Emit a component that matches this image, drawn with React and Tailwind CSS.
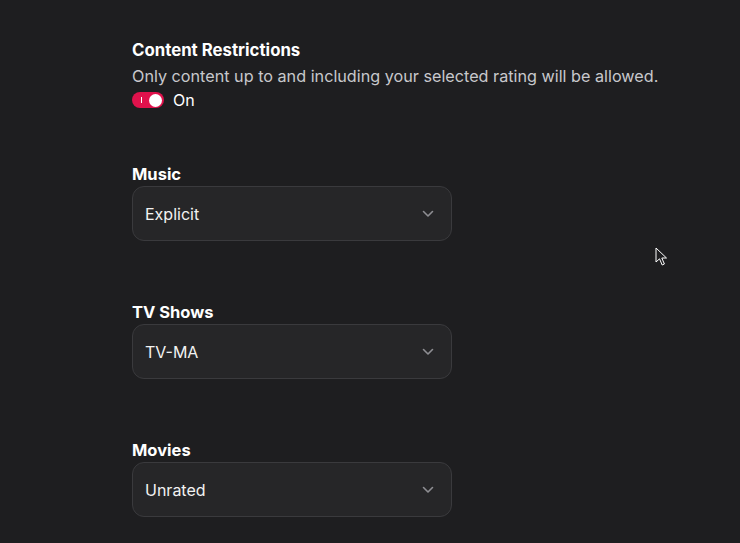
import React from "react";

function Chevron() {
  return (
    <svg width="12" height="8" viewBox="0 0 12 8" fill="none">
      <path d="M1.5 1.5 L6 6 L10.5 1.5" stroke="#8e8e93" strokeWidth="1.6" strokeLinecap="round" strokeLinejoin="round" />
    </svg>
  );
}

function RatingSelect({ label, value }) {
  return (
    <div className="flex flex-col">
      <div className="text-[16.5px] font-bold text-white leading-[20px]">{label}</div>
      <div className="mt-[2px] w-[320px] h-[55px] rounded-[12px] border border-[#3a3a3d] bg-[#262628] flex items-center justify-between pl-[12px] pr-[17px]">
        <span className="text-[16px] text-[#f2f2f2]">{value}</span>
        <Chevron />
      </div>
    </div>
  );
}

export default function App() {
  return (
    <div className="relative w-[740px] h-[543px] overflow-hidden bg-[#1e1e20] font-['Inter',sans-serif]">
      <div className="pl-[132px] pt-[40px] flex flex-col">
        <div className="text-[16.8px] font-bold text-white leading-[20px]">Content Restrictions</div>
        <div className="mt-[6px] text-[16.2px] text-[#c8c8cc] leading-[20px]">
          Only content up to and including your selected rating will be allowed.
        </div>
        <div className="mt-[4px] flex items-center gap-[9px]">
          <div className="relative w-[32px] h-[16px] rounded-full bg-[#e0124c] flex items-center justify-between pl-[9px] pr-[2px]">
            <span className="w-[1px] h-[6px] bg-white" />
            <span className="w-[13px] h-[13px] rounded-full bg-white" />
          </div>
          <span className="text-[16px] text-white leading-[20px]">On</span>
        </div>
        <div className="mt-[54px] flex flex-col gap-[61px]">
          <RatingSelect label="Music" value="Explicit" />
          <RatingSelect label="TV Shows" value="TV-MA" />
          <RatingSelect label="Movies" value="Unrated" />
        </div>
      </div>
      <svg className="absolute left-[655px] top-[247px]" width="14" height="20" viewBox="0 0 14 20">
        <path d="M1 1 L1 15 L4.5 11.8 L7.2 18 L9.4 17 L6.8 11 L11.5 11 Z" fill="#1e1e20" stroke="#ffffff" strokeWidth="1" strokeLinejoin="round" />
      </svg>
    </div>
  );
}
